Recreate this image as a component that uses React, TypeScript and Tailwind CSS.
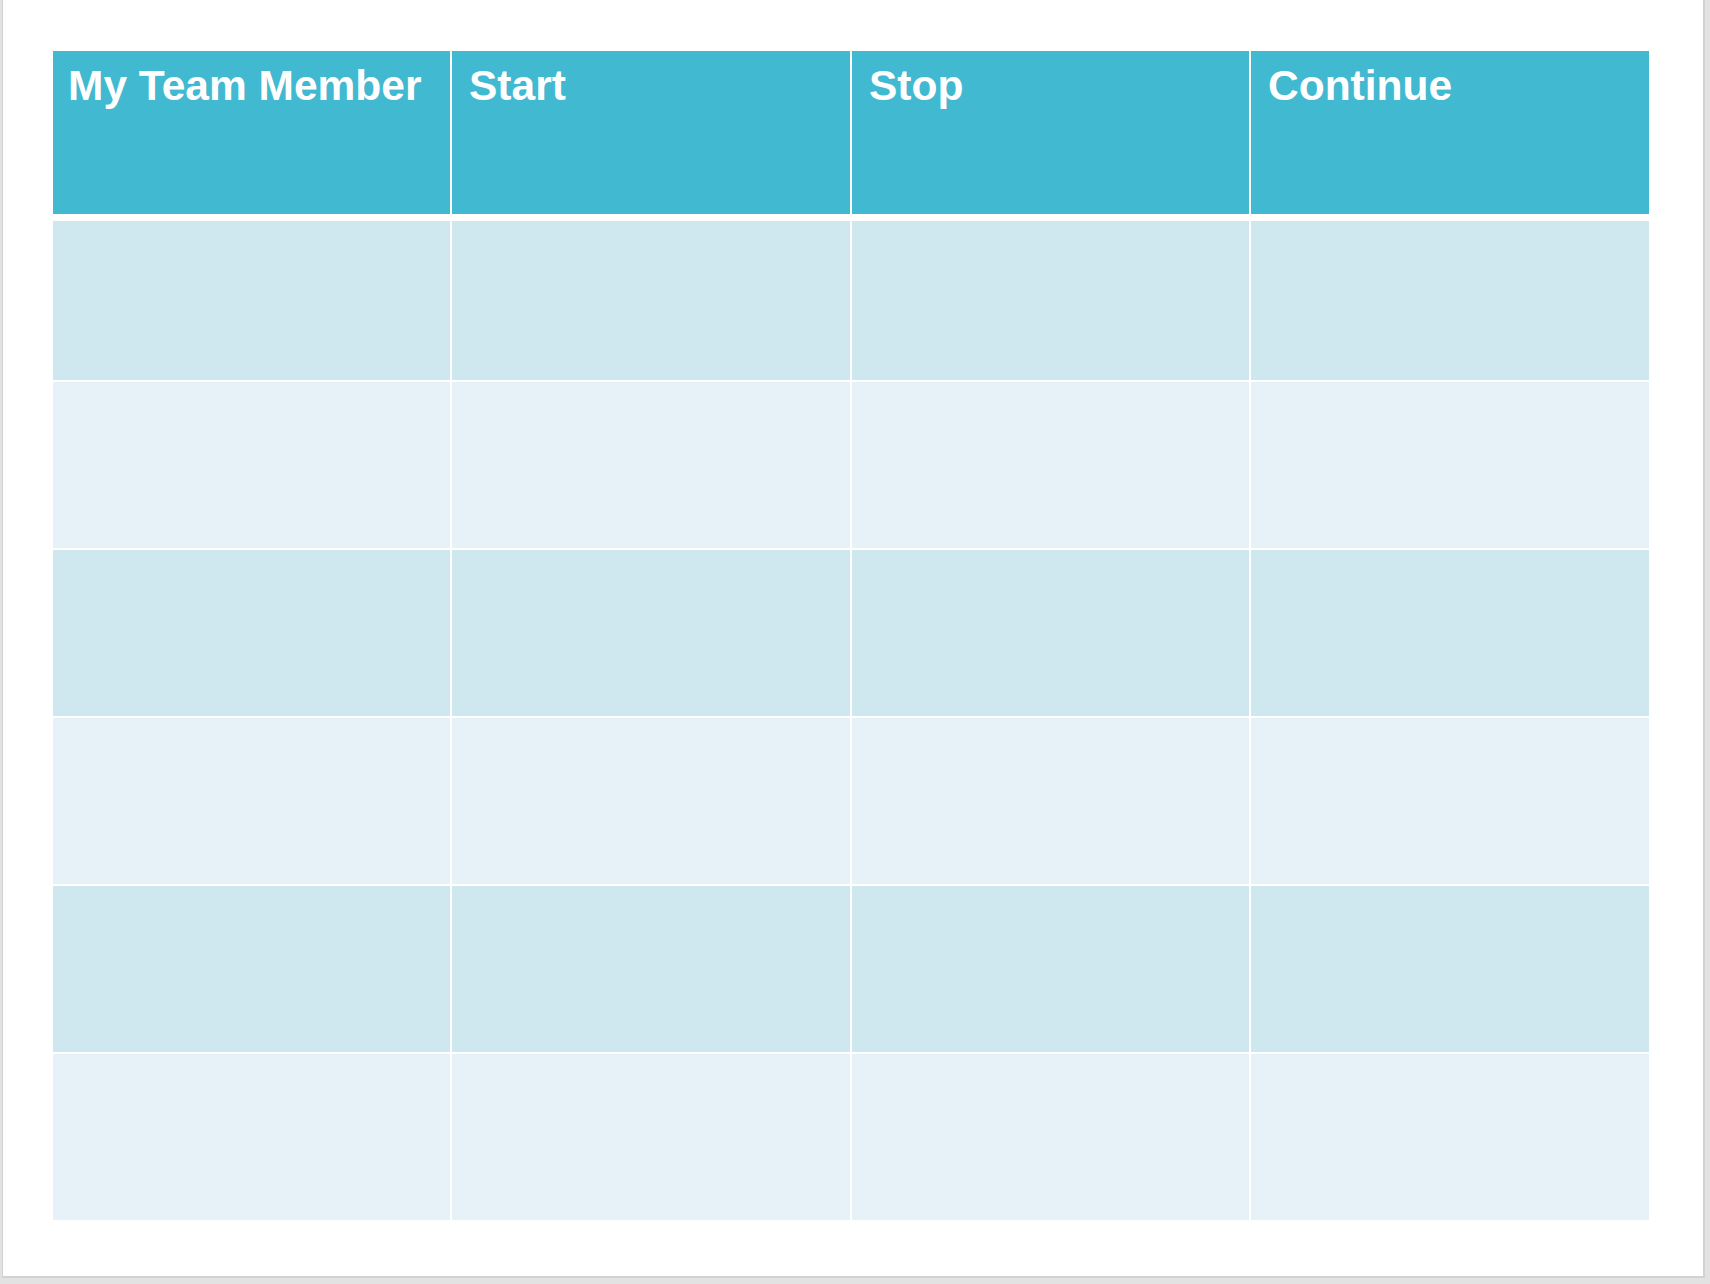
import React from "react";

const headers = ["My Team Member", "Start", "Stop", "Continue"];
const rowHeights = ["h-[159px]", "h-[166px]", "h-[166px]", "h-[166px]", "h-[166px]", "h-[166px]"];

export default function App() {
  return (
    <div className="w-[1710px] h-[1284px] bg-[#e2e2e2] overflow-hidden" style={{ fontFamily: '"Liberation Sans", Arial, sans-serif' }}>
      <div className="ml-[2px] w-[1703px] h-[1278px] border-l border-r-2 border-b-2 border-[#d2d2d2] bg-white pt-[51px] pl-[50px]">
        <div className="w-[1596px] flex flex-col">
          <div className="grid grid-cols-[397px_398px_397px_398px] gap-x-[2px] h-[163px]">
            {headers.map((h, i) => (
              <div key={h} className={`bg-[#41b9d1] ${i === 0 ? "pl-[15px]" : "pl-[17px]"} pt-[11px] text-white font-bold text-[42.5px] leading-[1.15] whitespace-nowrap`}>
                {h}
              </div>
            ))}
          </div>
          <div className="mt-[7px] flex flex-col gap-y-[2px]">
            {rowHeights.map((rh, i) => (
              <div key={i} className={`grid grid-cols-[397px_398px_397px_398px] gap-x-[2px] ${rh}`}>
                {[0, 1, 2, 3].map((c) => (
                  <div key={c} className={i % 2 === 0 ? "bg-[#cfe7ee]" : "bg-[#e7f2f8]"} />
                ))}
              </div>
            ))}
          </div>
        </div>
      </div>
    </div>
  );
}
